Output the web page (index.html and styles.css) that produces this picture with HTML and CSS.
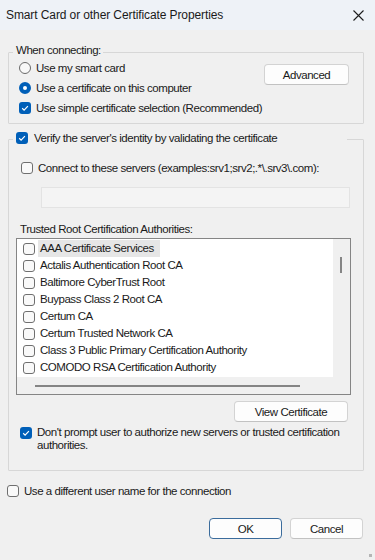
FILE: index.html
```html
<!DOCTYPE html>
<html lang="en">
<head>
    <meta charset="UTF-8">
    <meta name="viewport" content="width=device-width, initial-scale=1.0">
    <title>Smart Card or other Certificate Properties</title>
    <link rel="stylesheet" href="styles.css">
</head>
<body>
    <div class="window">
        <div class="titlebar">
            <span class="title">Smart Card or other Certificate Properties</span>
            <svg class="close" width="11" height="11" viewBox="0 0 11 11">
                <path d="M0.5 0.5 L10.5 10.5 M10.5 0.5 L0.5 10.5" stroke="#1c1c1c" stroke-width="1.1" fill="none"/>
            </svg>
        </div>

        <div class="content">
            <fieldset class="group connect-group">
                <legend class="group-title">When connecting:</legend>
                <div class="connect-body">
                    <div class="options">
                        <label class="option"><span class="radio"></span>Use my smart card</label>
                        <label class="option"><span class="radio checked"></span>Use a certificate on this computer</label>
                        <label class="option">
                            <span class="check checked">
                                <svg width="12" height="12" viewBox="0 0 12 12"><path d="M3.2 6.3 L5.1 8.1 L8.9 4.2" stroke="#fff" stroke-width="1.2" fill="none"/></svg>
                            </span>Use simple certificate selection (Recommended)
                        </label>
                    </div>
                    <button class="btn advanced">Advanced</button>
                </div>
            </fieldset>

            <fieldset class="group verify-group">
                <legend class="group-title check-title">
                    <label class="option">
                        <span class="check checked">
                            <svg width="12" height="12" viewBox="0 0 12 12"><path d="M3.2 6.3 L5.1 8.1 L8.9 4.2" stroke="#fff" stroke-width="1.2" fill="none"/></svg>
                        </span>Verify the server's identity by validating the certificate
                    </label>
                </legend>

                <label class="option servers-row"><span class="check"></span>Connect to these servers (examples:srv1;srv2;.*\.srv3\.com):</label>
                <div class="servers-input"></div>

                <div class="list-label">Trusted Root Certification Authorities:</div>
                <div class="listbox">
                    <ul class="items">
                        <li class="item"><span class="check"></span><span class="item-text selected">AAA Certificate Services</span></li>
                        <li class="item"><span class="check"></span><span class="item-text">Actalis Authentication Root CA</span></li>
                        <li class="item"><span class="check"></span><span class="item-text">Baltimore CyberTrust Root</span></li>
                        <li class="item"><span class="check"></span><span class="item-text">Buypass Class 2 Root CA</span></li>
                        <li class="item"><span class="check"></span><span class="item-text">Certum CA</span></li>
                        <li class="item"><span class="check"></span><span class="item-text">Certum Trusted Network CA</span></li>
                        <li class="item"><span class="check"></span><span class="item-text">Class 3 Public Primary Certification Authority</span></li>
                        <li class="item"><span class="check"></span><span class="item-text">COMODO RSA Certification Authority</span></li>
                    </ul>
                    <div class="vscroll"><span class="vthumb"></span></div>
                    <div class="hscroll"><span class="hthumb"></span></div>
                </div>

                <div class="view-row">
                    <button class="btn view-cert">View Certificate</button>
                </div>

                <label class="option prompt-row">
                    <span class="check checked">
                        <svg width="12" height="12" viewBox="0 0 12 12"><path d="M3.2 6.3 L5.1 8.1 L8.9 4.2" stroke="#fff" stroke-width="1.2" fill="none"/></svg>
                    </span>
                    <span class="prompt-text">Don't prompt user to authorize new servers or trusted certification authorities.</span>
                </label>
            </fieldset>

            <label class="option user-row"><span class="check"></span>Use a different user name for the connection</label>

            <div class="actions">
                <button class="btn ok">OK</button>
                <button class="btn">Cancel</button>
            </div>
        </div>
        <div class="grip"></div>
    </div>
</body>
</html>
```

FILE: styles.css
```css
* {
    margin: 0;
    padding: 0;
    box-sizing: border-box;
}

body {
    width: 375px;
    height: 560px;
    overflow: hidden;
    background-color: #f0f0f0;
    color: #1a1a1a;
    font-family: 'Liberation Sans', Arial, sans-serif;
    font-size: 11.5px;
    letter-spacing: -0.45px;
}

.window {
    height: 560px;
    display: flex;
    flex-direction: column;
}

.titlebar {
    height: 30px;
    flex: none;
    display: flex;
    align-items: center;
    justify-content: space-between;
    padding: 0 11px 0 6px;
    background: #eef2f7;
}

.title {
    font-size: 12px;
    letter-spacing: -0.1px;
    color: #1a1a1a;
}

.close {
    display: block;
    margin-top: 1px;
}

.content {
    padding: 14px 11px 0 8px;
}

/* group boxes */
.group {
    border: 1px solid #d7d7d7;
    border-radius: 1px;
    padding: 0;
    min-width: 0;
}

.group-title {
    margin-left: 4px;
    padding: 0 2px 4px 3px;
    line-height: 12px;
}

.option {
    display: flex;
    align-items: center;
    gap: 5px;
    line-height: 14px;
    white-space: nowrap;
}

.radio {
    width: 12px;
    height: 12px;
    flex: none;
    border: 1px solid #6a6a6a;
    border-radius: 50%;
    background: #f8f8f8;
}

.radio.checked {
    border: 4px solid #005fb8;
    background: #fff;
}

.check {
    width: 12px;
    height: 12px;
    flex: none;
    border: 1px solid #6f6f6f;
    border-radius: 3px;
    background: #f9f9f9;
    display: flex;
    align-items: center;
    justify-content: center;
}

.check.checked {
    border: none;
    background: #005fb8;
}

.check svg {
    display: block;
}

.btn {
    height: 21px;
    border: 1px solid #d3d3d3;
    border-bottom-color: #c2c2c2;
    border-radius: 4px;
    background: #fdfdfd;
    font-family: inherit;
    font-size: 11.5px;
    letter-spacing: -0.45px;
    color: #1a1a1a;
}

/* when connecting */
.connect-body {
    display: flex;
    justify-content: space-between;
    align-items: flex-start;
    padding: 0 14px 5px 10px;
}

.options {
    margin-top: -2px;
}

.options .option {
    height: 20px;
}

.advanced {
    width: 85px;
    margin-top: 4px;
}

/* verify group */
.verify-group {
    margin-top: 7px;
    padding: 0 12px 18px 7px;
}

.check-title {
    width: 334px;
    margin-left: -3px;
    padding: 0 3px 2px 3px;
    line-height: 14px;
}

.check-title .option {
    gap: 6px;
}

.servers-row {
    margin: 13px 0 0 5px;
    height: 16px;
}

.servers-input {
    margin: 11px 0 0 25px;
    width: 309px;
    height: 21px;
    background: #f4f4f4;
    border: 1px solid #e3e3e3;
}

.list-label {
    margin: 14px 0 0 4px;
    line-height: 14px;
}

.listbox {
    margin-top: 2px;
    width: 335px;
    border: 1px solid #858585;
    background: #f0f0f0;
    display: grid;
    grid-template-columns: 316px 17px;
    grid-template-rows: 138px 17px;
}

.items {
    list-style: none;
    background: #fff;
    padding-top: 1px;
}

.item {
    height: 17px;
    display: flex;
    align-items: center;
    padding-left: 6px;
    line-height: 17px;
}

.item-text {
    margin-left: 3px;
    padding: 0 6px 0 2px;
    white-space: nowrap;
}

.item-text.selected {
    background: #e6e6e6;
}

.vscroll {
    padding: 18px 0 0 7px;
}

.vthumb {
    display: block;
    width: 2px;
    height: 16px;
    background: #858585;
}

.hscroll {
    grid-column: 1 / 3;
    padding: 8px 0 0 18px;
}

.hthumb {
    display: block;
    width: 265px;
    height: 2px;
    background: #858585;
}

.view-row {
    display: flex;
    justify-content: flex-end;
    margin-top: 6px;
    padding-right: 3px;
}

.view-cert {
    width: 114px;
}

.prompt-row {
    margin: 4px 0 0 4px;
    align-items: flex-start;
    white-space: normal;
}

.prompt-row .check {
    margin-top: 1px;
}

.prompt-text {
    line-height: 13px;
    width: 325px;
    flex: none;
}

.user-row {
    margin: 13px 0 0 -1px;
}

.actions {
    display: flex;
    justify-content: flex-end;
    gap: 8px;
    margin-top: 20px;
    padding-right: 1px;
}

.actions .btn {
    width: 73px;
}

.btn.ok {
    border: 1px solid #3b6c9c;
}

.grip {
    align-self: flex-end;
    margin: auto 3px 3px 0;
    width: 3px;
    height: 3px;
    background: #b5b5b5;
}
```
